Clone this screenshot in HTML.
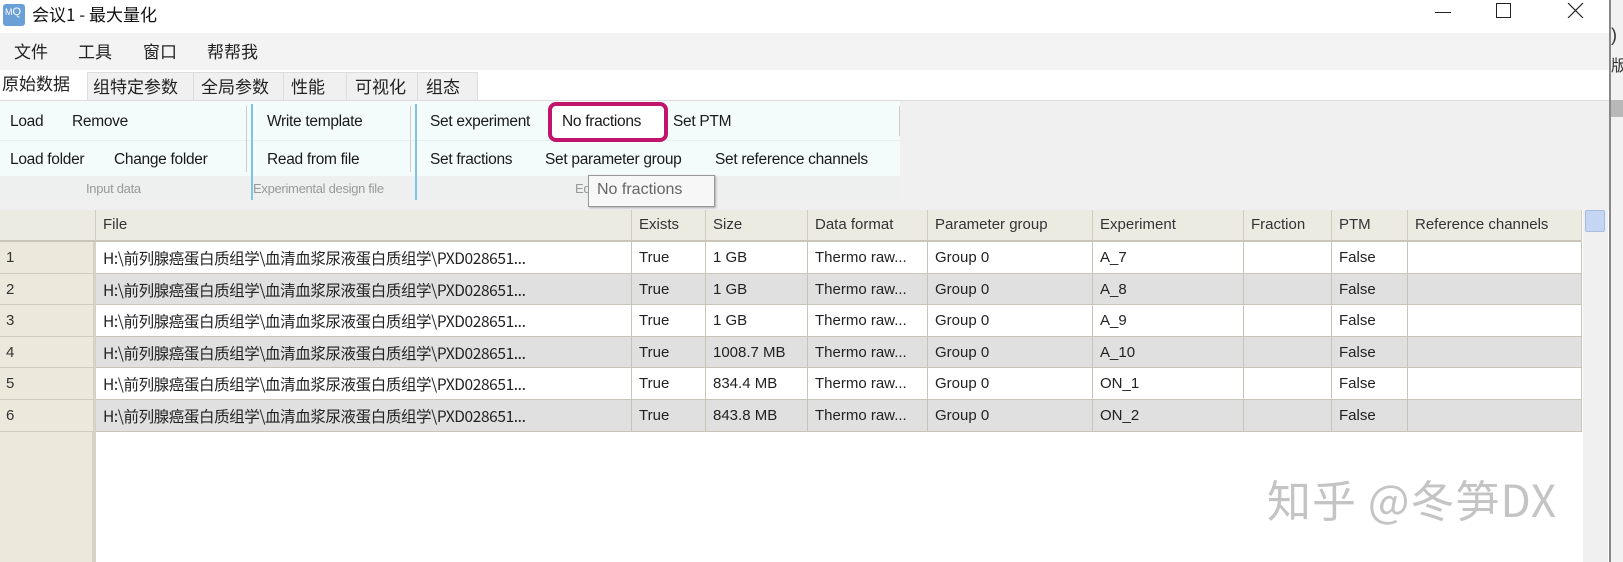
<!DOCTYPE html>
<html><head><meta charset="utf-8"><style>
*{margin:0;padding:0;box-sizing:border-box}
body{width:1623px;height:562px;position:relative;overflow:hidden;background:#fff;font-family:"Liberation Sans","Noto Sans CJK SC",sans-serif;color:#222}
.a{position:absolute;white-space:nowrap}
.cjk{font-family:"Noto Sans CJK SC",sans-serif}
.rb{font-size:15.5px;color:#1a1a1a;letter-spacing:-0.3px}
.hd{position:absolute;top:210px;height:32px;background:#ecebe2;border-right:1px solid #d0cdbf;border-bottom:2px solid #c9c6b8;font-size:15px;padding:6px 0 0 7px;color:#333}
.c{position:absolute;border-right:1px solid #c8c5b8;border-bottom:1px solid #c8c5b8;font-size:15px;padding:7px 0 0 7px;overflow:hidden;white-space:nowrap;color:#222}
.rh{position:absolute;left:0;width:93px;background:#ece9dc;border-bottom:1px solid #d0cdbf;font-size:15px;padding:7px 0 0 6px;color:#333}
</style></head><body>
<div class="a" style="left:3px;top:4px;width:22px;height:22px;background:#6a9fd8;border-radius:3px;color:#fff;font-size:9px;padding:2px 0 0 2px">M<span style="font-size:11px">Q</span></div>
<div class="a cjk" style="left:32px;top:1px;font-size:17px;color:#111">会议1 - 最大量化</div>
<div class="a" style="left:1435px;top:12px;width:16px;height:1px;background:#222"></div>
<div class="a" style="left:1496px;top:3px;width:15px;height:15px;border:1px solid #222"></div>
<svg class="a" style="left:1567px;top:3px" width="17" height="15"><path d="M1 0L16 15M16 0L1 15" stroke="#222" stroke-width="1.2"/></svg>
<div class="a" style="left:1609px;top:0;width:14px;height:562px;background:#f2f2f2;border-left:2px solid #888"></div>
<div class="a" style="left:1611px;top:25px;font-size:18px;color:#333">)</div>
<div class="a cjk" style="left:1611px;top:52px;font-size:16px;color:#333">版</div>
<div class="a" style="left:1611px;top:100px;width:12px;height:17px;background:#b8b8b8"></div>
<div class="a" style="left:0;top:33px;width:1609px;height:37px;background:#f3f3f3"></div>
<div class="a cjk" style="left:14px;top:38px;font-size:17px">文件</div>
<div class="a cjk" style="left:78px;top:38px;font-size:17px">工具</div>
<div class="a cjk" style="left:143px;top:38px;font-size:17px">窗口</div>
<div class="a cjk" style="left:207px;top:38px;font-size:17px">帮帮我</div>
<div class="a" style="left:87px;top:72px;width:391px;height:28px;background:#f0f0f0;border:1px solid #ddd;border-bottom:none"></div>
<div class="a cjk" style="left:2px;top:70px;font-size:17px">原始数据</div>
<div class="a cjk" style="left:93px;top:73px;font-size:17px">组特定参数</div>
<div class="a" style="left:193px;top:73px;width:1px;height:27px;background:#ddd"></div>
<div class="a cjk" style="left:201px;top:73px;font-size:17px">全局参数</div>
<div class="a" style="left:283px;top:73px;width:1px;height:27px;background:#ddd"></div>
<div class="a cjk" style="left:291px;top:73px;font-size:17px">性能</div>
<div class="a" style="left:346px;top:73px;width:1px;height:27px;background:#ddd"></div>
<div class="a cjk" style="left:355px;top:73px;font-size:17px">可视化</div>
<div class="a" style="left:417px;top:73px;width:1px;height:27px;background:#ddd"></div>
<div class="a cjk" style="left:426px;top:73px;font-size:17px">组态</div>
<div class="a" style="left:0;top:100px;width:1609px;height:110px;background:#f0f0f0;border-top:1px solid #dcdcdc"></div>
<div class="a" style="left:0;top:101px;width:900px;height:75px;background:#f3fbfb"></div>
<div class="a" style="left:0;top:140px;width:900px;height:1px;background:#e8efef"></div>
<div class="a" style="left:0;top:176px;width:900px;height:24px;background:#eef0f0"></div>
<div class="a" style="left:246px;top:106px;width:1px;height:66px;background:#ccc"></div>
<div class="a" style="left:251px;top:104px;width:2px;height:96px;background:#7ec3ea"></div>
<div class="a" style="left:410px;top:106px;width:1px;height:66px;background:#ccc"></div>
<div class="a" style="left:415px;top:104px;width:2px;height:96px;background:#7ec3ea"></div>
<div class="a" style="left:899px;top:106px;width:1px;height:30px;background:#ccc"></div>
<div class="a rb" style="left:10px;top:113px">Load</div>
<div class="a rb" style="left:72px;top:113px">Remove</div>
<div class="a rb" style="left:10px;top:151px">Load folder</div>
<div class="a rb" style="left:114px;top:151px">Change folder</div>
<div class="a rb" style="left:86px;top:181px;font-size:13px;color:#999">Input data</div>
<div class="a rb" style="left:267px;top:113px">Write template</div>
<div class="a rb" style="left:267px;top:151px">Read from file</div>
<div class="a rb" style="left:253px;top:181px;font-size:13px;color:#999;width:160px;overflow:hidden">Experimental design file</div>
<div class="a rb" style="left:430px;top:113px">Set experiment</div>
<div class="a" style="left:548px;top:102px;width:120px;height:40px;border:4px solid #c0156a;border-radius:8px;background:#fff"></div>
<div class="a rb" style="left:562px;top:113px">No fractions</div>
<div class="a rb" style="left:673px;top:113px">Set PTM</div>
<div class="a rb" style="left:430px;top:151px">Set fractions</div>
<div class="a rb" style="left:545px;top:151px">Set parameter group</div>
<div class="a rb" style="left:715px;top:151px">Set reference channels</div>
<div class="a rb" style="left:575px;top:181px;font-size:13px;color:#999">Edit experimental design</div>
<div class="a" style="left:588px;top:175px;width:127px;height:32px;background:#f7f7f7;border:1px solid #999;box-shadow:1px 1px 2px #aaa;font-size:16px;color:#666;padding:5px 0 0 8px">No fractions</div>
<div class="a" style="left:0;top:210px;width:1583px;height:352px;background:#fff"></div>
<div class="a" style="left:0;top:242px;width:96px;height:320px;background:#ece9dc;border-right:4px solid #d6d3c6"></div>
<div class="a" style="left:1583px;top:205px;width:25px;height:357px;background:#f0f0f0"></div>
<div class="a" style="left:1585px;top:210px;width:20px;height:22px;background:#c5d6f5;border:1px solid #aabbe0;border-radius:2px"></div>
<div class="hd" style="left:0;width:96px"></div>
<div class="hd" style="left:96px;width:536px">File</div>
<div class="hd" style="left:632px;width:74px">Exists</div>
<div class="hd" style="left:706px;width:102px">Size</div>
<div class="hd" style="left:808px;width:120px">Data format</div>
<div class="hd" style="left:928px;width:165px">Parameter group</div>
<div class="hd" style="left:1093px;width:151px">Experiment</div>
<div class="hd" style="left:1244px;width:88px">Fraction</div>
<div class="hd" style="left:1332px;width:76px">PTM</div>
<div class="hd" style="left:1408px;width:174px">Reference channels</div>
<div id="rows"></div>
<script>
var d=[["1 GB","A_7"],["1 GB","A_8"],["1 GB","A_9"],["1008.7 MB","A_10"],["834.4 MB","ON_1"],["843.8 MB","ON_2"]];
var cols=[[96,536],[632,74],[706,102],[808,120],[928,165],[1093,151],[1244,88],[1332,76],[1408,174]];
var h="";
for(var i=0;i<6;i++){var y=242+Math.round(i*31.6);var y2=242+Math.round((i+1)*31.6);var hh=y2-y;var bg=i%2?"#e0e0e0":"#fff";
h+='<div class="rh" style="top:'+y+'px;height:'+hh+'px">'+(i+1)+'</div>';
var v=['H:\\前列腺癌蛋白质组学\\血清血浆尿液蛋白质组学\\PXD028651...','True',d[i][0],'Thermo raw...','Group 0',d[i][1],'','False',''];
for(var j=0;j<9;j++)h+='<div class="c'+(j==0?' cjk':'')+'" style="left:'+cols[j][0]+'px;width:'+cols[j][1]+'px;top:'+y+'px;height:'+hh+'px;background:'+bg+(j==0?';font-size:15.5px;padding-top:5px;letter-spacing:-0.4px':'')+'">'+v[j]+'</div>';}
document.getElementById("rows").innerHTML=h;
</script>
<div class="a cjk" style="left:1267px;top:466px;font-size:44px;color:#c4c4c4;letter-spacing:1px">知乎 @冬笋DX</div>
</body></html>
